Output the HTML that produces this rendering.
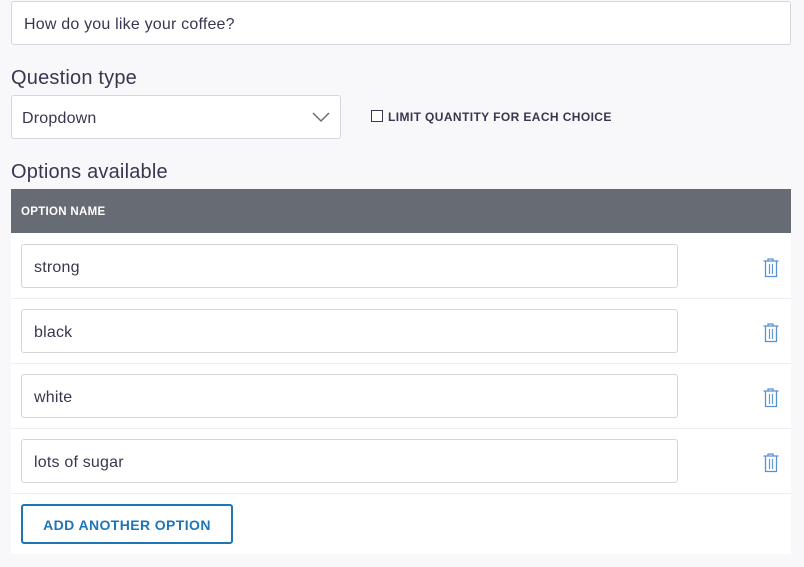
<!DOCTYPE html>
<html><head><style>
*{box-sizing:border-box;margin:0;padding:0}
body{width:804px;height:567px;background:#f8f8fa;font-family:"Liberation Sans",sans-serif;color:#39364f;position:relative;overflow:hidden}
.abs{position:absolute}
.inp{position:absolute;background:#fff;border:1px solid #d6d5db;border-radius:3px;font-size:16px;padding-left:12px;padding-top:3px;display:flex;align-items:center;color:#39364f;letter-spacing:.2px}
.lbl{font-size:20px;color:#39364f;letter-spacing:.2px}
.sep{position:absolute;left:11px;width:780px;height:1px;background:#eeedf2}
.trash{position:absolute;left:762px}
</style></head><body>
<div class="inp" style="left:11px;top:1px;width:780px;height:44px">How do you like your coffee?</div>
<div class="abs lbl" style="left:11px;top:67px">Question type</div>
<div class="inp" style="left:11px;top:95px;width:330px;height:44px;padding-left:10px">Dropdown
<svg class="abs" style="left:300px;top:16px" width="18" height="11" viewBox="0 0 18 11"><path d="M1 1l8 8 8-8" fill="none" stroke="#6b6a78" stroke-width="1.5"/></svg></div>
<div class="abs" style="left:371px;top:110px;width:12px;height:12px;border:1px solid #39364f;background:#fff"></div>
<div class="abs" style="left:388px;top:110px;font-size:12px;font-weight:bold;letter-spacing:.4px">LIMIT QUANTITY FOR EACH CHOICE</div>
<div class="abs lbl" style="left:11px;top:161px">Options available</div>
<div class="abs" style="left:11px;top:189px;width:780px;height:44px;background:#676b74;color:#fff;font-size:11.5px;font-weight:bold;padding:17px 0 0 10px;letter-spacing:.3px">OPTION NAME</div>
<div class="abs" style="left:11px;top:233px;width:780px;height:321px;background:#fff"></div>
<div class="inp" style="left:21px;top:244px;width:657px;height:44px">strong</div>
<div class="sep" style="top:298px"></div>
<div class="inp" style="left:21px;top:309px;width:657px;height:44px">black</div>
<div class="sep" style="top:363px"></div>
<div class="inp" style="left:21px;top:374px;width:657px;height:44px">white</div>
<div class="sep" style="top:428px"></div>
<div class="inp" style="left:21px;top:439px;width:657px;height:44px">lots of sugar</div>
<div class="sep" style="top:493px"></div>
<svg class="trash" style="top:258px" width="18" height="20" viewBox="0 0 18 20"><path d="M6 2.5V1h5v1.5M1.5 3h15M3.5 3.5v15h11v-15" fill="none" stroke="#5a8fd0" stroke-width="1.3"/><path d="M7.5 6v10M10.5 6v10" stroke="#5a9be0" stroke-width="1.2"/></svg>
<svg class="trash" style="top:323px" width="18" height="20" viewBox="0 0 18 20"><path d="M6 2.5V1h5v1.5M1.5 3h15M3.5 3.5v15h11v-15" fill="none" stroke="#5a8fd0" stroke-width="1.3"/><path d="M7.5 6v10M10.5 6v10" stroke="#5a9be0" stroke-width="1.2"/></svg>
<svg class="trash" style="top:388px" width="18" height="20" viewBox="0 0 18 20"><path d="M6 2.5V1h5v1.5M1.5 3h15M3.5 3.5v15h11v-15" fill="none" stroke="#5a8fd0" stroke-width="1.3"/><path d="M7.5 6v10M10.5 6v10" stroke="#5a9be0" stroke-width="1.2"/></svg>
<svg class="trash" style="top:453px" width="18" height="20" viewBox="0 0 18 20"><path d="M6 2.5V1h5v1.5M1.5 3h15M3.5 3.5v15h11v-15" fill="none" stroke="#5a8fd0" stroke-width="1.3"/><path d="M7.5 6v10M10.5 6v10" stroke="#5a9be0" stroke-width="1.2"/></svg>
<div class="abs" style="left:21px;top:504px;width:212px;height:40px;border:2px solid #1d76b8;border-radius:3px;color:#1d76b8;font-size:14px;font-weight:bold;display:flex;align-items:center;justify-content:center;letter-spacing:.4px;padding-top:2px">ADD ANOTHER OPTION</div>
</body></html>
